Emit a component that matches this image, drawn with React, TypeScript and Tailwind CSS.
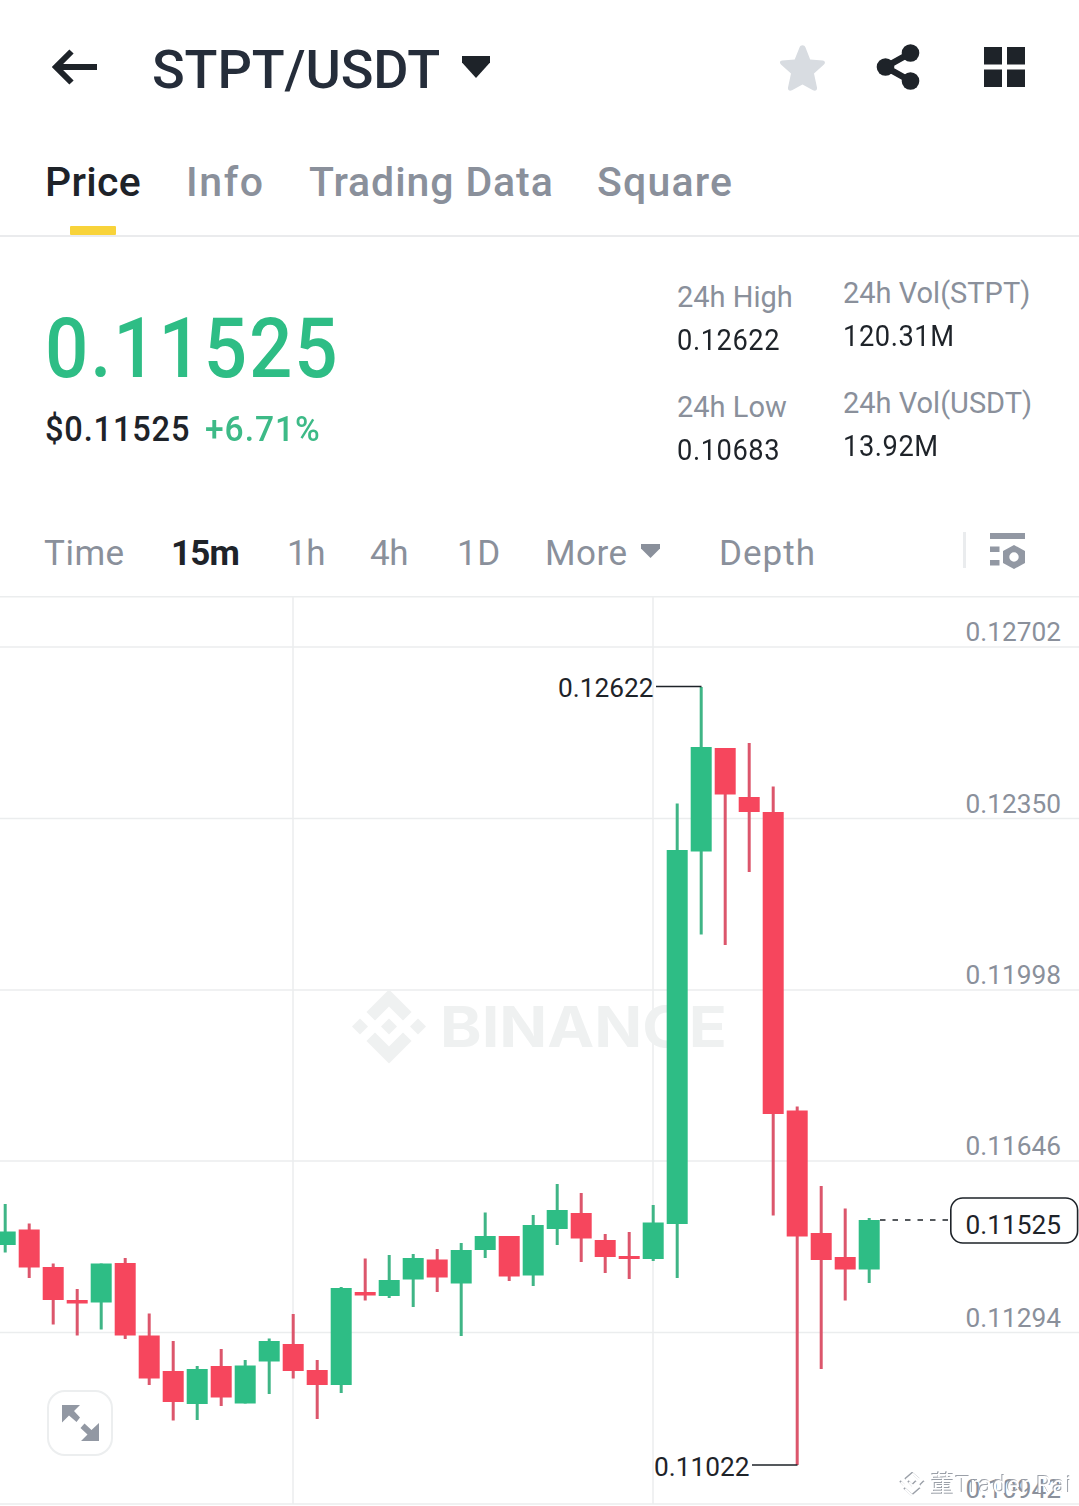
import React, { useState } from 'react';

interface Candle {
  top: number;
  bottom: number;
  high: number;
  low: number;
  up?: boolean;
}

const candles: Candle[] = [
  { top: 1231.5, bottom: 1245, high: 1204, low: 1252.5, up: true },
  { top: 1229.5, bottom: 1267.5, high: 1223.5, low: 1278 },
  { top: 1267, bottom: 1300, high: 1263.5, low: 1324.5 },
  { top: 1300, bottom: 1303.5, high: 1289, low: 1335.5 },
  { top: 1263.5, bottom: 1302.5, high: 1263.5, low: 1329.5, up: true },
  { top: 1263, bottom: 1335.5, high: 1258, low: 1339 },
  { top: 1335.5, bottom: 1378.5, high: 1313.5, low: 1385 },
  { top: 1371, bottom: 1402, high: 1341, low: 1420.5 },
  { top: 1369, bottom: 1404, high: 1366, low: 1420, up: true },
  { top: 1366, bottom: 1397.5, high: 1349, low: 1406 },
  { top: 1365.5, bottom: 1403.5, high: 1360, low: 1403.5, up: true },
  { top: 1341, bottom: 1361.5, high: 1338.5, low: 1394, up: true },
  { top: 1344, bottom: 1371, high: 1314, low: 1378.5 },
  { top: 1370, bottom: 1385, high: 1360, low: 1419 },
  { top: 1288, bottom: 1385, high: 1287, low: 1393, up: true },
  { top: 1292, bottom: 1295.5, high: 1258.5, low: 1300.5 },
  { top: 1280, bottom: 1296, high: 1255, low: 1298, up: true },
  { top: 1258, bottom: 1279.5, high: 1254, low: 1307, up: true },
  { top: 1259.5, bottom: 1277.5, high: 1249, low: 1292 },
  { top: 1250, bottom: 1283.5, high: 1243, low: 1336, up: true },
  { top: 1236, bottom: 1250, high: 1212.5, low: 1258, up: true },
  { top: 1236, bottom: 1276.5, high: 1236, low: 1281 },
  { top: 1225, bottom: 1275.5, high: 1215, low: 1286, up: true },
  { top: 1210, bottom: 1229, high: 1184, low: 1245, up: true },
  { top: 1213, bottom: 1238.5, high: 1193, low: 1262 },
  { top: 1240, bottom: 1257, high: 1234, low: 1273 },
  { top: 1256, bottom: 1259, high: 1232, low: 1279 },
  { top: 1222.5, bottom: 1259, high: 1205, low: 1261, up: true },
  { top: 850, bottom: 1224, high: 803.5, low: 1278, up: true },
  { top: 747, bottom: 851.5, high: 687, low: 934.5, up: true },
  { top: 748, bottom: 794.5, high: 748, low: 945 },
  { top: 797, bottom: 812, high: 743, low: 872 },
  { top: 812, bottom: 1114, high: 786.5, low: 1215.5 },
  { top: 1110.5, bottom: 1236.5, high: 1106.5, low: 1465 },
  { top: 1233, bottom: 1260, high: 1186, low: 1369 },
  { top: 1257, bottom: 1269.5, high: 1208.5, low: 1300.5 },
  { top: 1220, bottom: 1269.5, high: 1218, low: 1283, up: true },
];

const priceLines = [
  { y: 647, label: '0.12702' },
  { y: 818.5, label: '0.12350' },
  { y: 990, label: '0.11998' },
  { y: 1161, label: '0.11646' },
  { y: 1332.5, label: '0.11294' },
  { y: 1504, label: '0.10942' },
];

const tabs = [
  { name: 'Price', className: 'ml-[45px] w-[141px] tracking-[0.3px]' },
  { name: 'Info', className: 'w-[123px] tracking-[1.6px]' },
  { name: 'Trading Data', className: 'w-[288px] tracking-[0.9px]' },
  { name: 'Square', className: 'tracking-[1.2px]' },
];

const intervals = [
  { name: 'Time', className: 'w-[127px]' },
  { name: '15m', className: 'w-[116px] tracking-[-0.8px]' },
  { name: '1h', className: 'w-[83px] tracking-[-0.5px]' },
  { name: '4h', className: 'w-[87px] tracking-[-0.5px]' },
  { name: '1D', className: 'w-[88px]' },
];

const Header = () => (
  <header className="flex h-[134px] items-center pl-[50px] pr-[54px]">
    <svg className="h-[38px] w-[48px]" viewBox="0 0 48 38" fill="none" stroke="#1e2329" strokeWidth={6}>
      <path d="M21.5 3.5 6 19l15.500 15.500M6 19h41" />
    </svg>
    <h1 className="ml-[54px] w-[288px] pt-[6px] text-[54px] font-medium leading-none tracking-[-0.1px] text-[#252d3a]">STPT/USDT</h1>
    <svg className="ml-[22px] h-[22px] w-[28px]" viewBox="0 0 28 22" fill="#1e2329">
      <path d="M0 0h28v6.500L14 22 0 6.500z" />
    </svg>
    <svg className="ml-auto mt-px h-[46px] w-[45px]" viewBox="0 0 45 46" fill="#d8dce1">
      <path d="M19.500 2.500c1-3 5-3 6 0l4.700 12 12.500 1c2.500.2 3 2.500 1 4.200L34 28.500l3 14c.4 2.500-1.500 4-4 2.700L22.500 39.500 12 45.200c-2.500 1.300-4.400-.2-4-2.700l3-14L1.200 19.700c-2-1.700-1.500-4 1-4.200l12.500-1z" />
    </svg>
    <svg className="ml-[51px] h-[46px] w-[44px]" viewBox="0 0 44 46" fill="#1e2329">
      <path d="M34.500 9 9.500 23l25 14" fill="none" stroke="#1e2329" strokeWidth={6.5} />
      <circle cx="34.500" cy="9" r="8.800" />
      <circle cx="9.500" cy="23" r="8.800" />
      <circle cx="34.500" cy="37" r="8.800" />
    </svg>
    <svg className="ml-[64px] h-[40px] w-[41px]" viewBox="0 0 41 40" fill="#1e2329">
      <path d="M0 0h18v17.500H0zM23 0h18v17.500H23zM0 22.500h18V40H0zM23 22.500h18V40H23z" />
    </svg>
  </header>
);

const Stat: React.FC<{ label: string; value: string; className?: string }> = ({ label, value, className = '' }) => (
  <div className={`text-[29px] leading-[43px] ${className}`}>
    <p className="whitespace-nowrap text-[#8a909b]">{label}</p>
    <p className="origin-left scale-x-[0.94] tracking-[0.6px] text-[#1e2329]">{value}</p>
  </div>
);

const Ticker = () => (
  <section className="flex h-[271px] pl-[44px]">
    <div className="w-[633px] pt-[70px]">
      <p className="origin-left translate-x-px scale-x-[0.92] text-[83px] font-medium leading-[84px] tracking-[2px] text-[#2ebd85]">0.11525</p>
      <p className="mt-[15px] flex text-[35px] font-medium leading-[48px]">
        <span className="w-[161px] origin-left translate-x-px scale-x-[0.93] tracking-[0.9px] text-[#1e2329]">$0.11525</span>
        <span className="origin-left scale-x-[0.96] tracking-[1px] text-[#3dba87]">+6.71%</span>
      </p>
    </div>
    <div className="w-[166px] pt-[39px]">
      <Stat label="24h High" value="0.12622" />
      <Stat label="24h Low" value="0.10683" className="mt-[24px]" />
    </div>
    <div className="pt-[35px]">
      <Stat label="24h Vol(STPT)" value="120.31M" />
      <Stat label="24h Vol(USDT)" value="13.92M" className="mt-[24px]" />
    </div>
  </section>
);

// Chart coordinates are kept in page space, so the view box starts at the chart's top edge
const Chart = () => (
  <div className="relative h-[910px]">
    <svg className="block h-[910px] w-[1079px]" viewBox="0 596 1079 910" fontFamily="Roboto, sans-serif" fontSize={26}>
      <g stroke="#ebedee" strokeWidth={1.5}>
        <line x1={0} x2={1079} y1={596.75} y2={596.75} />
        {priceLines.map(line => (
          <line key={line.label} x1={0} x2={1079} y1={line.y} y2={line.y} />
        ))}
        <line x1={293} x2={293} y1={597} y2={1504} />
        <line x1={653} x2={653} y1={597} y2={1504} />
      </g>

      <g fill="#eff1f1">
        <path d="M389 989.500l22.500 22.500-8.500 8.500-14-14-14 14-8.500-8.500zM389 1063.500l22.500-22.500-8.500-8.500-14 14-14-14-8.500 8.500zM389 1018.500l8 8-8 8-8-8zM360 1018.500l8 8-8 8-8-8zM418 1018.500l8 8-8 8-8-8z" />
        <text x={440} y={1047} fontSize={57} fontWeight={700} fontFamily="Inter, sans-serif" textLength={287} lengthAdjust="spacingAndGlyphs">BINANCE</text>
      </g>

      {candles.map((c, i) => {
        const x = 5.2 + i * 24;
        return (
          <g key={i}>
            <rect x={x - 1.5} y={c.high} width={3} height={c.low - c.high} fill={c.up ? '#3fb586' : '#dc566c'} />
            <rect x={x - 10.5} y={c.top} width={21} height={c.bottom - c.top} fill={c.up ? '#2ebd85' : '#f6465d'} />
          </g>
        );
      })}

      <g fill="#8a909b">
        {priceLines.map(line => (
          <text key={line.label} x={965.5} y={line.y - 6} textLength={95.5} lengthAdjust="spacingAndGlyphs">{line.label}</text>
        ))}
      </g>

      <g stroke="#1e2329" strokeWidth={1.6} fill="none">
        <path d="M656 686.500h45.500M752 1465h45.500" />
        <path d="M880 1220h70" strokeDasharray="5.500 7" />
        <rect x={950.800} y={1198} width={126.800} height={45} rx={12} fill="#fff" />
      </g>
      <g fill="#1e2329">
        <text x={558} y={697} textLength={95.5} lengthAdjust="spacingAndGlyphs">0.12622</text>
        <text x={654} y={1476} textLength={95.5} lengthAdjust="spacingAndGlyphs">0.11022</text>
        <text x={965.5} y={1234} textLength={95.5} lengthAdjust="spacingAndGlyphs">0.11525</text>
      </g>
    </svg>

    <button className="absolute bottom-[50px] left-[47px] flex h-[66px] w-[66px] items-center justify-center rounded-[18px] border-[2.500px] border-[#eceeef] bg-white">
      <svg className="h-[36px] w-[37px]" viewBox="0 0 37 36" fill="#9298a3">
        <path d="M0 0h18l-6 6 6 6.500-3.500 4.500-7.500-6.500L0 17.500zM37 36H19l6.500-6.500-7-6.500 4-4.500 7 6.500 7.500-7z" />
      </svg>
    </button>

    <div className="absolute bottom-[5px] right-[6px] flex items-center text-white drop-shadow-[-0.700px_-0.700px_0.400px_#9ba0a8]">
      <svg className="mr-[4px] h-[24px] w-[28px]" viewBox="0 0 28 24" fill="none" stroke="#fff" strokeWidth={2}>
        <path d="M7 7l7-6 7 6M2 9l4 4M26 9l-4 4M10 9l4 4 4-4M6 16l8 7 8-7" />
      </svg>
      <span className="whitespace-nowrap font-['Roboto','Noto_Sans_CJK_SC',sans-serif] text-[24px] leading-[32px] tracking-[0.9px]">董Trader Rai</span>
    </div>
  </div>
);

export default function App() {
  const [activeTab, setActiveTab] = useState('Price');
  const [activeInterval, setActiveInterval] = useState('15m');

  return (
    <div className="h-[1506px] w-[1079px] overflow-hidden bg-white font-['Roboto',sans-serif]">
      <Header />

      <nav className="flex h-[103px] border-b-2 border-[#eaebed] text-[41px]">
        {tabs.map(tab => (
          <div key={tab.name} className={tab.className} onClick={() => setActiveTab(tab.name)}>
            <div className="flex w-fit flex-col items-center">
              <span className={`h-[92px] whitespace-nowrap pt-[5px] font-medium leading-[87px] ${activeTab === tab.name ? 'text-[#1e2329]' : 'text-[#8a909b]'}`}>
                {tab.name}
              </span>
              {activeTab === tab.name && <div className="h-[9px] w-[46px] rounded-[1px] bg-[#f8d33a]" />}
            </div>
          </div>
        ))}
      </nav>

      <Ticker />

      <div className="flex h-[88px] items-center pl-[44px] text-[35px] tracking-[0.5px] text-[#8a909b]">
        {intervals.map(item => (
          <span
            key={item.name}
            className={`mt-[5px] ${item.className} ${activeInterval === item.name ? 'font-bold text-[#1e2329]' : ''}`}
            onClick={() => setActiveInterval(item.name)}
          >
            {item.name}
          </span>
        ))}
        <span className="mt-[5px] flex w-[174px] items-center">
          More
          <svg className="mb-[8px] ml-[13px] h-[14px] w-[19px]" viewBox="0 0 19 14" fill="#8a909b">
            <path d="M0 0h19v4.500L9.500 14 0 4.500z" />
          </svg>
        </span>
        <span className="mt-[5px] tracking-[1px]">Depth</span>
        <div className="mb-[4px] ml-auto h-[36px] w-[3px] bg-[#eaecee]" />
        <svg className="mb-[2px] ml-[24px] mr-[54px] h-[36px] w-[35px]" viewBox="0 0 35 36" fill="#9298a3">
          <path d="M0 0h35v6H0zM0 13.500h9.500v5.500H0zM0 27h9.500v5.500H0z" />
          <path fillRule="evenodd" d="M24 12l11 6v12l-11 6-11-6V18zM24 19.300a4.700 4.700 0 1 0 0 9.400 4.700 4.700 0 0 0 0-9.400z" />
        </svg>
      </div>

      <Chart />
    </div>
  );
}
